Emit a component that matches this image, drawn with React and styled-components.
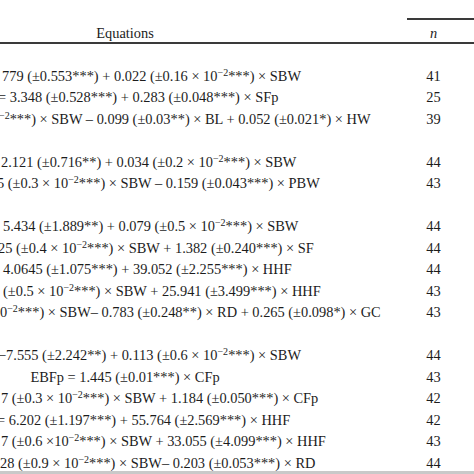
import React from "react";
import styled, { createGlobalStyle } from "styled-components";

const GlobalStyle = createGlobalStyle`
  html, body {
    margin: 0;
    padding: 0;
    background: #c9c9c9;
  }
  body {
    width: 474px;
    height: 474px;
    overflow: hidden;
  }
`;

const Sheet = styled.div`
  width: 474px;
  height: 470.5px;
  overflow: hidden;
  background: #fff;
  color: #1c1c1c;
  font: 14.4px "Liberation Serif", "Times New Roman", serif;
`;

const TopArea = styled.div`
  height: 20px;
  display: flex;
  justify-content: flex-end;
  align-items: flex-end;
`;

const SpanRule = styled.div`
  width: 67px;
  border-bottom: 2px solid #3a3a3a;
`;

const Grid = styled.div`
  display: grid;
  grid-template-columns: 250px 143px 81px;
  align-items: center;
  height: 21.5px;
`;

const HeaderRow = styled(Grid)`
  box-sizing: border-box;
  height: 24px;
  padding-top: 4px;
  line-height: 18px;
  border-bottom: 2px solid #3a3a3a;
`;

const HeadCell = styled.div`
  text-align: center;
  grid-column: ${(p) => p.col};
  font-style: ${(p) => (p.italic ? "italic" : "normal")};
`;

const EqCell = styled.div`
  grid-column: 1;
  white-space: nowrap;
  text-align: ${(p) => (p.center ? "center" : "left")};
  text-indent: ${(p) => (p.center ? 0 : p.lead)}px;
  line-height: 21.5px;
`;

const NCell = styled.div`
  grid-column: 3;
  text-align: center;
  line-height: 21.5px;
`;

const Sup = styled.sup`
  font-size: 10px;
  line-height: 0;
  vertical-align: 5px;
`;

const E2 = () => <Sup>−2</Sup>;

const groups = [
  [
    { lead: 2, n: 41, eq: <>779 (±0.553***) + 0.022 (±0.16 × 10<E2 />***) × SBW</> },
    { lead: -2, n: 25, eq: <>= 3.348 (±0.528***) + 0.283 (±0.048***) × SFp</> },
    { lead: -1, n: 39, eq: <><E2 />***) × SBW – 0.099 (±0.03**) × BL + 0.052 (±0.021*) × HW</> },
  ],
  [
    { lead: 1, n: 44, eq: <>2.121 (±0.716**) + 0.034 (±0.2 × 10<E2 />***) × SBW</> },
    { lead: -3, n: 43, eq: <>5 (±0.3 × 10<E2 />***) × SBW – 0.159 (±0.043***) × PBW</> },
  ],
  [
    { lead: 3, n: 44, eq: <>5.434 (±1.889**) + 0.079 (±0.5 × 10<E2 />***) × SBW</> },
    { lead: -2, n: 44, eq: <>25 (±0.4 × 10<E2 />***) × SBW + 1.382 (±0.240***) × SF</> },
    { lead: 3, n: 44, eq: <>4.0645 (±1.075***) + 39.052 (±2.255***) × HHF</> },
    { lead: 3, n: 43, eq: <>(±0.5 × 10<E2 />***) × SBW + 25.941 (±3.499***) × HHF</> },
    { lead: 0, n: 43, eq: <>0<E2 />***) × SBW– 0.783 (±0.248**) × RD + 0.265 (±0.098*) × GC</> },
  ],
  [
    { lead: -2, n: 44, eq: <>−7.555 (±2.242**) + 0.113 (±0.6 × 10<E2 />***) × SBW</> },
    { center: true, n: 43, eq: <>EBFp = 1.445 (±0.01***) × CFp</> },
    { lead: 1, n: 42, eq: <>7 (±0.3 × 10<E2 />***) × SBW + 1.184 (±0.050***) × CFp</> },
    { lead: -3, n: 42, eq: <>= 6.202 (±1.197***) + 55.764 (±2.569***) × HHF</> },
    { lead: 1, n: 43, eq: <>7 (±0.6 ×10<E2 />***) × SBW + 33.055 (±4.099***) × HHF</> },
    { lead: 0, n: 44, eq: <>28 (±0.9 × 10<E2 />***) × SBW– 0.203 (±0.053***) × RD</> },
  ],
];

export default function App() {
  return (
    <>
      <GlobalStyle />
      <Sheet>
        <TopArea>
          <SpanRule />
        </TopArea>
        <HeaderRow>
          <HeadCell col={1}>Equations</HeadCell>
          <HeadCell col={3} italic>
            n
          </HeadCell>
        </HeaderRow>
        {groups.map((rows, gi) => (
          <React.Fragment key={gi}>
            <Grid />
            {rows.map((r, ri) => (
              <Grid key={ri}>
                <EqCell center={r.center} lead={r.lead}>
                  {r.eq}
                </EqCell>
                <NCell>{r.n}</NCell>
              </Grid>
            ))}
          </React.Fragment>
        ))}
      </Sheet>
    </>
  );
}
